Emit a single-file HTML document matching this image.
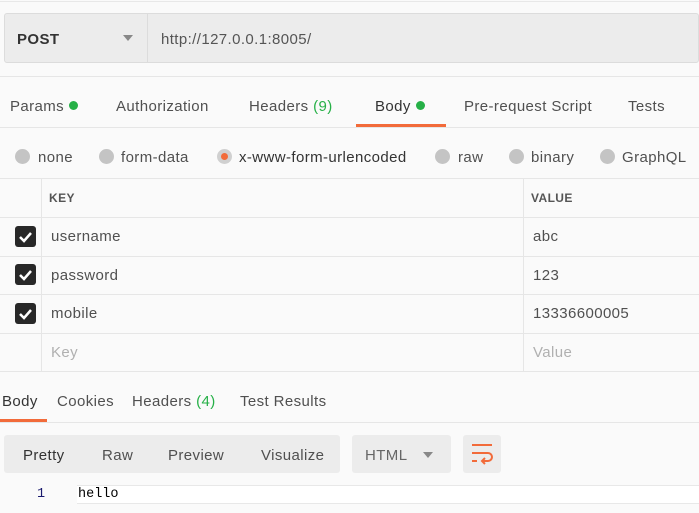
<!DOCTYPE html>
<html><head><meta charset="utf-8"><style>
*{box-sizing:border-box;margin:0;padding:0}
body{width:699px;height:513px;overflow:hidden;background:#fafafa;font-family:"Liberation Sans",sans-serif;color:#505050;font-size:15px;letter-spacing:0.4px;position:relative}
.a{position:absolute;white-space:nowrap}
.t{margin-top:1px}
.hl{position:absolute;left:0;width:699px;height:1px;background:#e6e6e6}
.dot{display:inline-block;width:9px;height:9px;border-radius:50%;background:#26b047;margin-left:5px;vertical-align:1px}
.r{position:absolute;width:15px;height:15px;border-radius:50%;background:#c4c4c4}
.cb{position:absolute;left:15px;width:21px;height:21px;border-radius:3px;background:#282828}
.g{color:#26b047}
</style></head><body>
<div class="hl" style="top:1px;background:#e8e8e8"></div>
<div class="a" style="left:4px;top:13px;width:695px;height:50px;background:#ececec;border:1px solid #dcdcdc;border-radius:3px"></div>
<div class="a" style="left:147px;top:14px;width:1px;height:48px;background:#dcdcdc"></div>
<div class="a" style="left:17px;top:31px;font-weight:bold;color:#333;font-size:15px">POST</div>
<div class="a" style="left:123px;top:35px;width:0;height:0;border-left:5px solid transparent;border-right:5px solid transparent;border-top:6px solid #888"></div>
<div class="a" style="left:161px;top:31px;color:#555">http://127.0.0.1:8005/</div>
<div class="hl" style="top:76px"></div>
<div class="a" style="left:10px;top:98px">Params<span class="dot"></span></div>
<div class="a" style="left:116px;top:98px">Authorization</div>
<div class="a" style="left:249px;top:98px">Headers <span class="g">(9)</span></div>
<div class="a" style="left:375px;top:98px;color:#333">Body<span class="dot"></span></div>
<div class="a" style="left:464px;top:98px">Pre-request Script</div>
<div class="a" style="left:628px;top:98px">Tests</div>
<div class="hl" style="top:127px"></div>
<div class="a" style="left:356px;top:124px;width:90px;height:3px;background:#f26b3a"></div>
<div class="r" style="left:15px;top:149px"></div><div class="a" style="left:38px;top:149px">none</div>
<div class="r" style="left:99px;top:149px"></div><div class="a" style="left:121px;top:149px">form-data</div>
<div class="r" style="left:217px;top:149px;background:#d0d0d0"><div style="position:absolute;left:4px;top:4px;width:7px;height:7px;border-radius:50%;background:#f26b3a"></div></div><div class="a" style="left:239px;top:149px;color:#333">x-www-form-urlencoded</div>
<div class="r" style="left:435px;top:149px"></div><div class="a" style="left:458px;top:149px">raw</div>
<div class="r" style="left:509px;top:149px"></div><div class="a" style="left:531px;top:149px">binary</div>
<div class="r" style="left:600px;top:149px"></div><div class="a" style="left:622px;top:149px">GraphQL</div>
<div class="hl" style="top:178px"></div>
<div class="hl" style="top:217px"></div>
<div class="hl" style="top:256px"></div>
<div class="hl" style="top:294px"></div>
<div class="hl" style="top:333px"></div>
<div class="hl" style="top:371px"></div>
<div class="a" style="left:41px;top:178px;width:1px;height:193px;background:#e6e6e6"></div>
<div class="a" style="left:523px;top:178px;width:1px;height:193px;background:#e6e6e6"></div>
<div class="a" style="left:49px;top:191px;font-size:12px;font-weight:bold;color:#555">KEY</div>
<div class="a" style="left:531px;top:191px;font-size:12px;font-weight:bold;color:#555">VALUE</div>
<div class="cb" style="top:226px"><svg width="21" height="21"><path d="M5 11l4 4 7-8" stroke="#fff" stroke-width="2.5" fill="none"/></svg></div>
<div class="cb" style="top:264px"><svg width="21" height="21"><path d="M5 11l4 4 7-8" stroke="#fff" stroke-width="2.5" fill="none"/></svg></div>
<div class="cb" style="top:303px"><svg width="21" height="21"><path d="M5 11l4 4 7-8" stroke="#fff" stroke-width="2.5" fill="none"/></svg></div>
<div class="a" style="left:51px;top:228px">username</div><div class="a" style="left:533px;top:228px">abc</div>
<div class="a" style="left:51px;top:267px">password</div><div class="a" style="left:533px;top:267px">123</div>
<div class="a" style="left:51px;top:305px">mobile</div><div class="a" style="left:533px;top:305px">13336600005</div>
<div class="a" style="left:51px;top:344px;color:#b0b0b0">Key</div><div class="a" style="left:533px;top:344px;color:#b0b0b0">Value</div>
<div class="a" style="left:2px;top:393px;color:#333">Body</div>
<div class="a" style="left:57px;top:393px">Cookies</div>
<div class="a" style="left:132px;top:393px">Headers <span class="g">(4)</span></div>
<div class="a" style="left:240px;top:393px">Test Results</div>
<div class="hl" style="top:422px"></div>
<div class="a" style="left:0;top:419px;width:47px;height:3px;background:#f26b3a"></div>
<div class="a" style="left:4px;top:435px;width:336px;height:38px;background:#ececec;border-radius:3px"></div>
<div class="a" style="left:23px;top:447px;color:#333">Pretty</div>
<div class="a" style="left:102px;top:447px">Raw</div>
<div class="a" style="left:168px;top:447px">Preview</div>
<div class="a" style="left:261px;top:447px">Visualize</div>
<div class="a" style="left:352px;top:435px;width:99px;height:38px;background:#ececec;border-radius:3px"></div>
<div class="a" style="left:365px;top:447px;color:#666">HTML</div>
<div class="a" style="left:423px;top:452px;width:0;height:0;border-left:5px solid transparent;border-right:5px solid transparent;border-top:6px solid #888"></div>
<div class="a" style="left:463px;top:435px;width:38px;height:38px;background:#ececec;border-radius:3px"><svg width="38" height="38"><path d="M9 10h20M9 18h16a4 4 0 0 1 0 8h-6M9 26h5M22 23l-3 3 3 3" stroke="#f26b3a" stroke-width="2" fill="none"/></svg></div>
<div class="a" style="left:77px;top:485px;width:622px;height:19px;background:#fff;border-top:1px solid #e8e8e8;border-bottom:1px solid #e8e8e8"></div>
<div class="a" style="left:37px;top:487px;font-family:'Liberation Mono',monospace;font-size:13.5px;letter-spacing:0;color:#1a1a6e">1</div>
<div class="a" style="left:78px;top:487px;font-family:'Liberation Mono',monospace;font-size:13.5px;letter-spacing:0;color:#000">hello</div>
</body></html>
